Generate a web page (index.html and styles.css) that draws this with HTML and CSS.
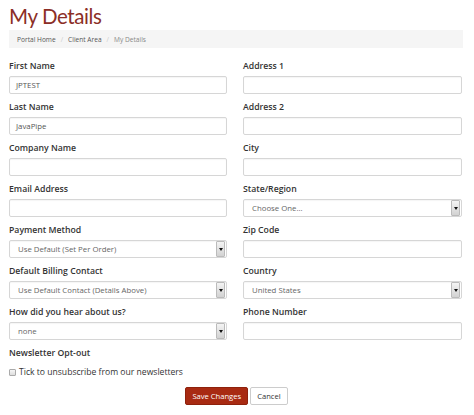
FILE: index.html
```html
<!DOCTYPE html>
<html>
<head>
<meta charset="utf-8">
<link rel="stylesheet" href="styles.css">
</head>
<body>
<div class="page">
  <h1 class="title">My Details</h1>
  <ol class="crumbs">
    <li><a>Portal Home</a></li>
    <li class="sep">/</li>
    <li><a>Client Area</a></li>
    <li class="sep">/</li>
    <li class="active">My Details</li>
  </ol>
  <form class="form">
    <div class="cols">
      <div class="col">
        <div class="field"><label>First Name</label><div class="input">JPTEST</div></div>
        <div class="field"><label>Last Name</label><div class="input">JavaPipe</div></div>
        <div class="field"><label>Company Name</label><div class="input"></div></div>
        <div class="field"><label>Email Address</label><div class="input"></div></div>
        <div class="field"><label>Payment Method</label><div class="select"><span class="val">Use Default (Set Per Order)</span><span class="arrow"><svg width="4" height="3" viewBox="0 0 4 3"><path d="M0 0H4L2 3Z" fill="#111"/></svg></span></div></div>
        <div class="field"><label>Default Billing Contact</label><div class="select"><span class="val">Use Default Contact (Details Above)</span><span class="arrow"><svg width="4" height="3" viewBox="0 0 4 3"><path d="M0 0H4L2 3Z" fill="#111"/></svg></span></div></div>
        <div class="field"><label>How did you hear about us?</label><div class="select"><span class="val">none</span><span class="arrow"><svg width="4" height="3" viewBox="0 0 4 3"><path d="M0 0H4L2 3Z" fill="#111"/></svg></span></div></div>
      </div>
      <div class="col">
        <div class="field"><label>Address 1</label><div class="input"></div></div>
        <div class="field"><label>Address 2</label><div class="input"></div></div>
        <div class="field"><label>City</label><div class="input"></div></div>
        <div class="field"><label>State/Region</label><div class="select"><span class="val">Choose One...</span><span class="arrow"><svg width="4" height="3" viewBox="0 0 4 3"><path d="M0 0H4L2 3Z" fill="#111"/></svg></span></div></div>
        <div class="field"><label>Zip Code</label><div class="input"></div></div>
        <div class="field"><label>Country</label><div class="select"><span class="val">United States</span><span class="arrow"><svg width="4" height="3" viewBox="0 0 4 3"><path d="M0 0H4L2 3Z" fill="#111"/></svg></span></div></div>
        <div class="field"><label>Phone Number</label><div class="input"></div></div>
      </div>
    </div>
    <div class="field"><label>Newsletter Opt-out</label></div>
    <div class="check"><span class="box"></span><span>Tick to unsubscribe from our newsletters</span></div>
    <div class="actions">
      <span class="btn primary">Save Changes</span>
      <span class="btn">Cancel</span>
    </div>
  </form>
</div>
</body>
</html>
```

FILE: styles.css
```css
* { box-sizing: border-box; }
html, body { margin: 0; padding: 0; background: #fff; }
body { font-family: "Open Sans", "DejaVu Sans", sans-serif; color: #333; }
.page { width: 454px; margin-left: 9px; }
.title {
  margin: 4px 0 0;
  font-family: Lato, "Open Sans", sans-serif;
  font-weight: 400;
  font-size: 20.5px;
  line-height: 24px;
  color: #8b2e26;
  letter-spacing: -0.4px;
}
.crumbs {
  list-style: none;
  margin: 2px 0 0;
  padding: 0 0 0 8px;
  height: 18px;
  background: #f5f5f5;
  display: flex;
  align-items: center;
  gap: 5px;
  font-size: 6.6px;
  color: #555;
}
.crumbs .sep { color: #ccc; }
.crumbs .active { color: #888; }
.form { margin-top: 12px; }
.cols { display: grid; grid-template-columns: 218px 219px; column-gap: 16px; }
.field { margin-bottom: 7px; }
.field label {
  display: block;
  font-size: 8.7px;
  font-weight: 600;
  line-height: 12px;
  margin-bottom: 4px;
  color: #333;
}
.input, .select {
  height: 18px;
  border: 1px solid #d6d6d6;
  border-radius: 2px;
  font-size: 7.8px;
  color: #555;
  display: flex;
  align-items: center;
  padding-left: 6px;
  box-shadow: inset 0 1px 1px rgba(0,0,0,0.04);
}
.select { padding-left: 8px; padding-right: 1px; font-size: 7.8px; }
.select .val { flex: 1; color: #666; }
.arrow {
  width: 9px;
  height: 16px;
  border: 1px solid #bbb;
  border-radius: 1px;
  background: linear-gradient(#f4f4f4, #d2d2d2);
  display: flex;
  align-items: center;
  justify-content: center;
}
.arrow svg { display: block; }
.check {
  display: flex;
  align-items: center;
  gap: 3px;
  height: 12px;
  margin-top: 2px;
  font-size: 8.6px;
  color: #333;
}
.check .box {
  width: 7px;
  height: 7px;
  border: 1px solid #aaa;
  background: linear-gradient(#f6f6f6, #ddd);
  border-radius: 1px;
}
.actions {
  display: flex;
  justify-content: center;
  gap: 2px;
  margin-top: 9px;
  padding-left: 1px;
}
.btn {
  height: 18px;
  padding: 0 6px;
  border: 1px solid #ccc;
  border-radius: 2px;
  background: #fff;
  font-size: 7.6px;
  color: #333;
  display: flex;
  align-items: center;
}
.btn.primary {
  background: #a82a12;
  border-color: #8e210c;
  color: #fff;
}
```
